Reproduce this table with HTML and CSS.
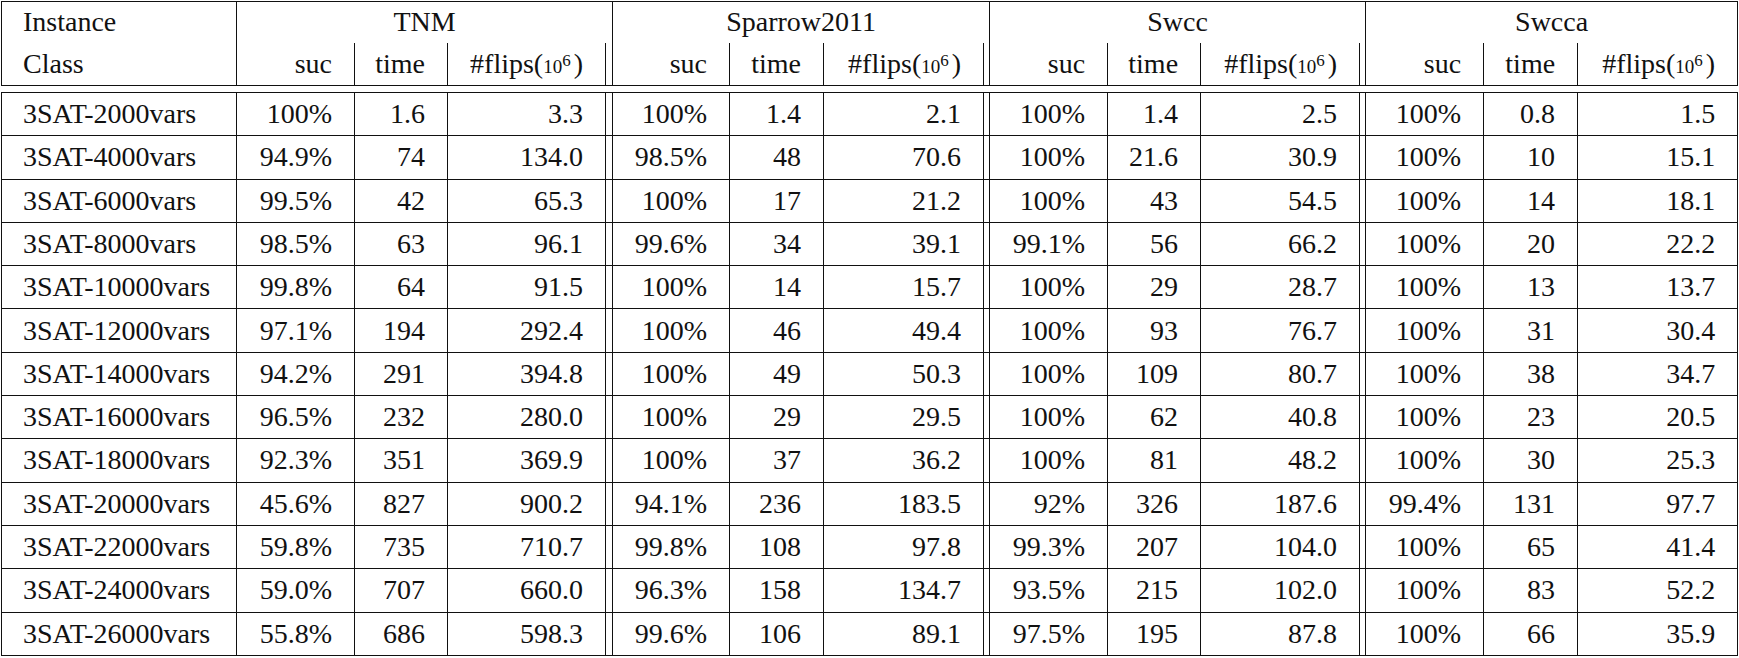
FILE: index.html
```html
<!DOCTYPE html>
<html lang="en">
<head>
<meta charset="utf-8">
<title>3SAT results</title>
<link rel="stylesheet" href="styles.css">
</head>
<body>
<table class="results">
  <colgroup>
    <col><col><col><col><col><col><col><col><col><col><col><col><col><col><col><col>
  </colgroup>
  <thead>
    <tr class="hrow1">
      <th class="inst">Instance</th>
      <th class="grp" colspan="4">TNM</th>
      <th class="grp" colspan="4">Sparrow2011</th>
      <th class="grp" colspan="4">Swcc</th>
      <th class="grp end" colspan="3">Swcca</th>
    </tr>
    <tr class="hrow2">
      <th class="inst">Class</th>
      <th>suc</th><th>time</th><th>#flips(<span class="pow">10<sup>6</sup></span>)</th><th class="sp"></th>
      <th>suc</th><th>time</th><th>#flips(<span class="pow">10<sup>6</sup></span>)</th><th class="sp"></th>
      <th>suc</th><th>time</th><th>#flips(<span class="pow">10<sup>6</sup></span>)</th><th class="sp"></th>
      <th>suc</th><th>time</th><th class="end">#flips(<span class="pow">10<sup>6</sup></span>)</th>
    </tr>
  </thead>
  <tbody>
    <tr class="gap"><td colspan="16"></td></tr>
    <tr><td class="inst">3SAT-2000vars</td><td>100%</td><td>1.6</td><td>3.3</td><td class="sp"></td><td>100%</td><td>1.4</td><td>2.1</td><td class="sp"></td><td>100%</td><td>1.4</td><td>2.5</td><td class="sp"></td><td>100%</td><td>0.8</td><td class="end">1.5</td></tr>
    <tr><td class="inst">3SAT-4000vars</td><td>94.9%</td><td>74</td><td>134.0</td><td class="sp"></td><td>98.5%</td><td>48</td><td>70.6</td><td class="sp"></td><td>100%</td><td>21.6</td><td>30.9</td><td class="sp"></td><td>100%</td><td>10</td><td class="end">15.1</td></tr>
    <tr><td class="inst">3SAT-6000vars</td><td>99.5%</td><td>42</td><td>65.3</td><td class="sp"></td><td>100%</td><td>17</td><td>21.2</td><td class="sp"></td><td>100%</td><td>43</td><td>54.5</td><td class="sp"></td><td>100%</td><td>14</td><td class="end">18.1</td></tr>
    <tr><td class="inst">3SAT-8000vars</td><td>98.5%</td><td>63</td><td>96.1</td><td class="sp"></td><td>99.6%</td><td>34</td><td>39.1</td><td class="sp"></td><td>99.1%</td><td>56</td><td>66.2</td><td class="sp"></td><td>100%</td><td>20</td><td class="end">22.2</td></tr>
    <tr><td class="inst">3SAT-10000vars</td><td>99.8%</td><td>64</td><td>91.5</td><td class="sp"></td><td>100%</td><td>14</td><td>15.7</td><td class="sp"></td><td>100%</td><td>29</td><td>28.7</td><td class="sp"></td><td>100%</td><td>13</td><td class="end">13.7</td></tr>
    <tr><td class="inst">3SAT-12000vars</td><td>97.1%</td><td>194</td><td>292.4</td><td class="sp"></td><td>100%</td><td>46</td><td>49.4</td><td class="sp"></td><td>100%</td><td>93</td><td>76.7</td><td class="sp"></td><td>100%</td><td>31</td><td class="end">30.4</td></tr>
    <tr><td class="inst">3SAT-14000vars</td><td>94.2%</td><td>291</td><td>394.8</td><td class="sp"></td><td>100%</td><td>49</td><td>50.3</td><td class="sp"></td><td>100%</td><td>109</td><td>80.7</td><td class="sp"></td><td>100%</td><td>38</td><td class="end">34.7</td></tr>
    <tr><td class="inst">3SAT-16000vars</td><td>96.5%</td><td>232</td><td>280.0</td><td class="sp"></td><td>100%</td><td>29</td><td>29.5</td><td class="sp"></td><td>100%</td><td>62</td><td>40.8</td><td class="sp"></td><td>100%</td><td>23</td><td class="end">20.5</td></tr>
    <tr><td class="inst">3SAT-18000vars</td><td>92.3%</td><td>351</td><td>369.9</td><td class="sp"></td><td>100%</td><td>37</td><td>36.2</td><td class="sp"></td><td>100%</td><td>81</td><td>48.2</td><td class="sp"></td><td>100%</td><td>30</td><td class="end">25.3</td></tr>
    <tr><td class="inst">3SAT-20000vars</td><td>45.6%</td><td>827</td><td>900.2</td><td class="sp"></td><td>94.1%</td><td>236</td><td>183.5</td><td class="sp"></td><td>92%</td><td>326</td><td>187.6</td><td class="sp"></td><td>99.4%</td><td>131</td><td class="end">97.7</td></tr>
    <tr><td class="inst">3SAT-22000vars</td><td>59.8%</td><td>735</td><td>710.7</td><td class="sp"></td><td>99.8%</td><td>108</td><td>97.8</td><td class="sp"></td><td>99.3%</td><td>207</td><td>104.0</td><td class="sp"></td><td>100%</td><td>65</td><td class="end">41.4</td></tr>
    <tr><td class="inst">3SAT-24000vars</td><td>59.0%</td><td>707</td><td>660.0</td><td class="sp"></td><td>96.3%</td><td>158</td><td>134.7</td><td class="sp"></td><td>93.5%</td><td>215</td><td>102.0</td><td class="sp"></td><td>100%</td><td>83</td><td class="end">52.2</td></tr>
    <tr class="lastrow"><td class="inst">3SAT-26000vars</td><td>55.8%</td><td>686</td><td>598.3</td><td class="sp"></td><td>99.6%</td><td>106</td><td>89.1</td><td class="sp"></td><td>97.5%</td><td>195</td><td>87.8</td><td class="sp"></td><td>100%</td><td>66</td><td class="end">35.9</td></tr>
  </tbody>
</table>
</body>
</html>
```

FILE: styles.css
```css
html, body {
  margin: 0;
  padding: 0;
  background: #ffffff;
}

body {
  padding: 1px 0 0 1px;
  font-family: "Liberation Serif", "Times New Roman", serif;
  font-size: 28px;
  color: #111111;
}

.results {
  table-layout: fixed;
  width: 1737px;
  border-collapse: separate;
  border-spacing: 0;
  font-family: "Liberation Serif", "Times New Roman", serif;
  font-size: 28px;
}

.results col:nth-child(1)  { width: 235px; }
.results col:nth-child(2)  { width: 118px; }
.results col:nth-child(3)  { width: 93px; }
.results col:nth-child(4)  { width: 158px; }
.results col:nth-child(5)  { width: 7px; }
.results col:nth-child(6)  { width: 117px; }
.results col:nth-child(7)  { width: 94px; }
.results col:nth-child(8)  { width: 160px; }
.results col:nth-child(9)  { width: 6px; }
.results col:nth-child(10) { width: 118px; }
.results col:nth-child(11) { width: 93px; }
.results col:nth-child(12) { width: 159px; }
.results col:nth-child(13) { width: 6px; }
.results col:nth-child(14) { width: 118px; }
.results col:nth-child(15) { width: 94px; }
.results col:nth-child(16) { width: 161px; }

.results th,
.results td {
  font-family: "Liberation Serif", "Times New Roman", serif;
  font-size: 28px;
  padding: 0 22px 0 0;
  font-weight: normal;
  text-align: right;
  vertical-align: middle;
  white-space: nowrap;
  line-height: 1.15;
  border-left: 1px solid #111111;
}

.results .inst {
  text-align: left;
  padding: 0 0 0 21px;
}

.results .sp {
  padding: 0;
}

.results .end {
  border-right: 1px solid #111111;
}

/* header */
.hrow1 {
  height: 42px;
}

.hrow1 th {
  border-top: 1px solid #111111;
}

.hrow1 .grp {
  text-align: center;
  padding: 0;
}

.hrow2 {
  height: 42px;
}

.pow {
  font-size: 19px;
}

.pow sup {
  font-size: 17px;
  vertical-align: 7px;
  line-height: 0;
  margin-right: 3px;
}

/* double rule between header and body */
.gap {
  height: 7px;
}

.results .gap td {
  border-left: none;
  border-top: 1px solid #111111;
  padding: 0;
  font-size: 0;
  line-height: 0;
}

/* body rows */
tbody tr {
  height: 43.3px;
}

tbody td {
  border-top: 1px solid #111111;
}

tbody tr.gap {
  height: 7px;
}

tbody tr.lastrow {
  height: 44.3px;
}

tbody tr.lastrow td {
  border-bottom: 1px solid #111111;
}
```
